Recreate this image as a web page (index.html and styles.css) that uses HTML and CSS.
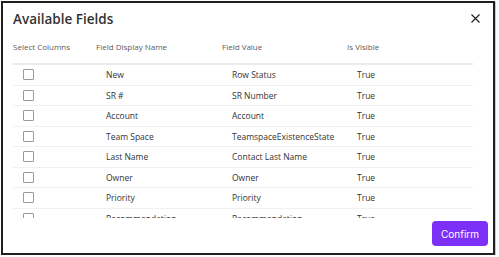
FILE: index.html
```html
<!DOCTYPE html>
<html lang="en">
<head>
    <meta charset="UTF-8">
    <meta name="viewport" content="width=device-width, initial-scale=1.0">
    <title>Available Fields</title>
    <link rel="stylesheet" href="styles.css">
</head>
<body>

<div class="modal">
    <div class="modal-header">
        <h2 class="modal-title">Available Fields</h2>
        <button class="close-btn" aria-label="Close">
            <svg width="9" height="9" viewBox="0 0 9 9">
                <path d="M0.5 0.5 L8.5 8.5 M8.5 0.5 L0.5 8.5" stroke="#222" stroke-width="1.2" fill="none"/>
            </svg>
        </button>
    </div>

    <div class="fields">
        <div class="fields-row fields-head">
            <span>Select Columns</span>
            <span>Field Display Name</span>
            <span>Field Value</span>
            <span>Is Visible</span>
        </div>
        <div class="fields-body">
            <div class="fields-row"><span><input type="checkbox" class="check"></span><span>New</span><span>Row Status</span><span>True</span></div>
            <div class="fields-row"><span><input type="checkbox" class="check"></span><span>SR #</span><span>SR Number</span><span>True</span></div>
            <div class="fields-row"><span><input type="checkbox" class="check"></span><span>Account</span><span>Account</span><span>True</span></div>
            <div class="fields-row"><span><input type="checkbox" class="check"></span><span>Team Space</span><span>TeamspaceExistenceState</span><span>True</span></div>
            <div class="fields-row"><span><input type="checkbox" class="check"></span><span>Last Name</span><span>Contact Last Name</span><span>True</span></div>
            <div class="fields-row"><span><input type="checkbox" class="check"></span><span>Owner</span><span>Owner</span><span>True</span></div>
            <div class="fields-row"><span><input type="checkbox" class="check"></span><span>Priority</span><span>Priority</span><span>True</span></div>
            <div class="fields-row"><span><input type="checkbox" class="check"></span><span>Recommendation</span><span>Recommendation</span><span>True</span></div>
            <div class="fields-row"><span><input type="checkbox" class="check"></span><span>Status</span><span>Status</span><span>True</span></div>
        </div>
    </div>

    <div class="modal-footer">
        <button class="confirm-btn">Confirm</button>
    </div>
</div>

</body>
</html>
```

FILE: styles.css
```css
body {
    margin: 0;
    padding: 1px 0 0 1px;
    background-color: #fff;
    font-family: "Open Sans", "Noto Sans", sans-serif;
    color: #333;
}

.modal {
    box-sizing: border-box;
    width: 494px;
    height: 254px;
    border: 2px solid #1f1f1f;
    background-color: #fff;
    box-shadow: 1px 1px 0 #c8c8c8;
    display: flex;
    flex-direction: column;
}

.modal-header {
    height: 32px;
    padding: 0 12px 0 10px;
    display: flex;
    align-items: center;
    justify-content: space-between;
}

.modal-title {
    margin: 0;
    font-size: 13.5px;
    font-weight: 600;
    color: #333;
}

.close-btn {
    border: none;
    background: none;
    padding: 0;
    margin: 0 1px 1px 0;
    width: 9px;
    height: 9px;
    display: flex;
    cursor: pointer;
}

.fields {
    margin: 0 20px 0 10px;
}

.fields-row {
    display: grid;
    grid-template-columns: 83px 126px 125px 1fr;
    align-items: center;
    box-sizing: border-box;
    height: 20.5px;
    border-bottom: 1px solid #f1f1f1;
    font-size: 8.5px;
    color: #333;
}

.fields-row span {
    padding-left: 10px;
    white-space: nowrap;
    display: flex;
    align-items: center;
}

.fields-head {
    height: 30px;
    padding-bottom: 5px;
    border-bottom: 2px solid #ebebeb;
    color: #5c5c5c;
    font-size: 8px;
}

.fields-head span {
    padding-left: 0;
}

.fields-body {
    height: 153px;
    overflow: hidden;
}

.check {
    appearance: none;
    margin: 0;
    width: 11px;
    height: 11px;
    border: 1px solid #9a9a9a;
    border-radius: 1px;
    background-color: #fff;
}

.modal-footer {
    flex: 1;
    display: flex;
    justify-content: flex-end;
    align-items: flex-start;
    padding: 3px 5px 0 0;
}

.confirm-btn {
    width: 56px;
    height: 25px;
    border: none;
    border-radius: 4px;
    background-color: #7b2ff7;
    color: #fff;
    font-family: "Inter", "Liberation Sans", sans-serif;
    font-size: 10px;
    cursor: pointer;
}
```
